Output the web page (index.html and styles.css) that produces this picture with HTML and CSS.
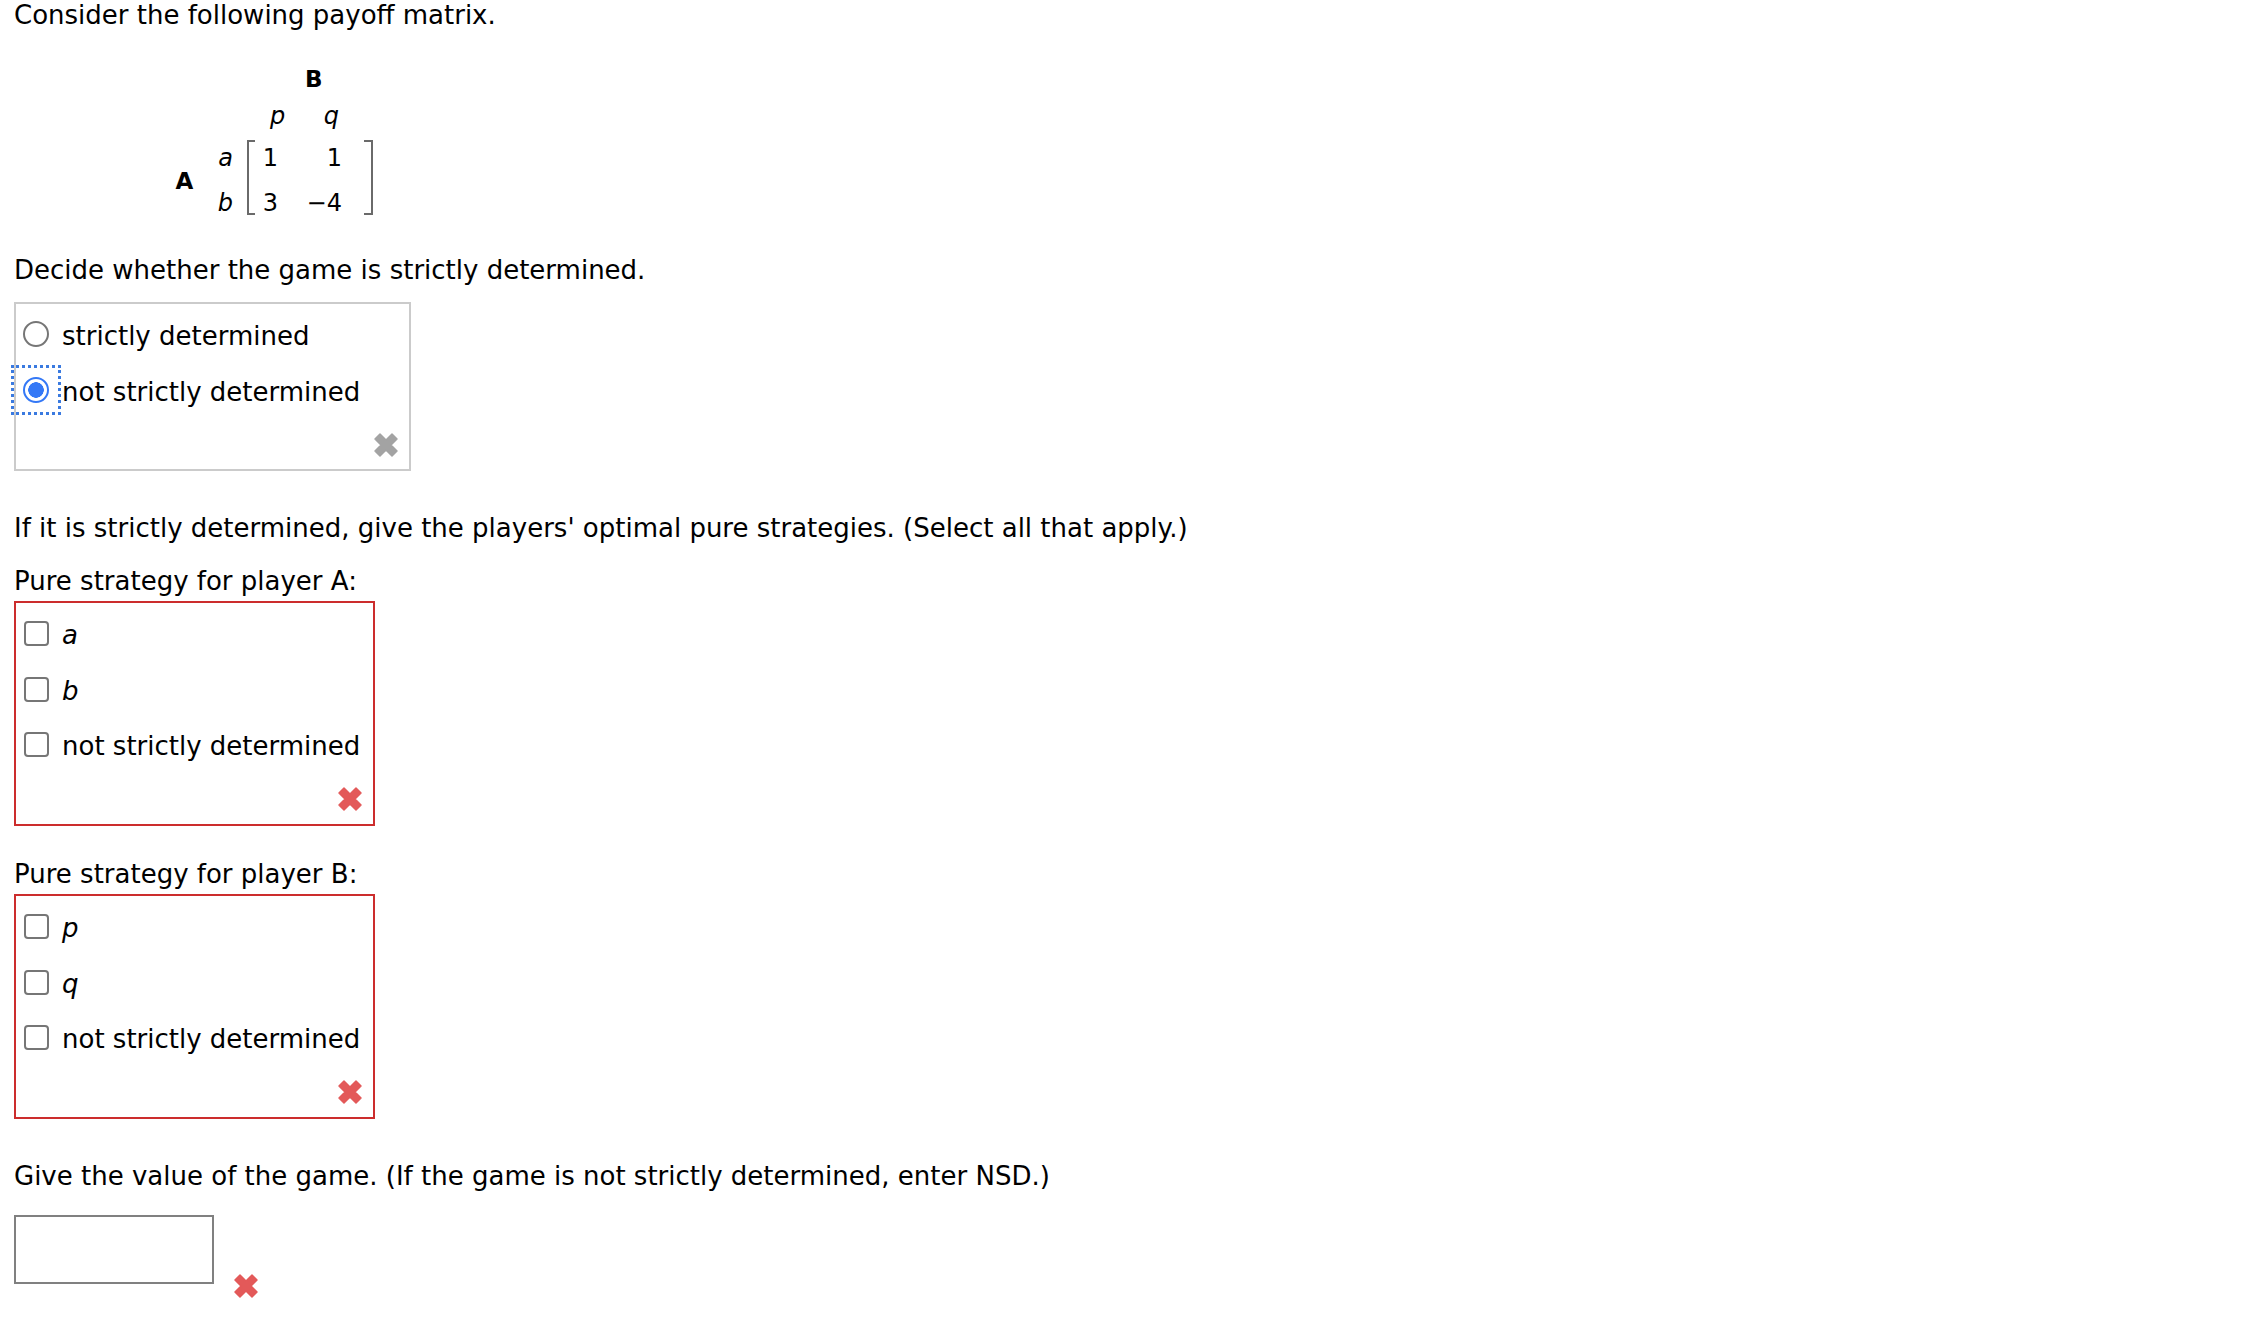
FILE: index.html
```html
<!DOCTYPE html>
<html lang="en">
<head>
<meta charset="utf-8">
<title>Payoff matrix</title>
<link rel="stylesheet" href="styles.css">
</head>
<body>
<div class="page">
  <p class="q">Consider the following payoff matrix.</p>

  <div class="matrix">
    <div class="m-B">B</div>
    <div class="m-p">p</div>
    <div class="m-q">q</div>
    <div class="m-A">A</div>
    <div class="m-a">a</div>
    <div class="m-b">b</div>
    <div class="lb"></div>
    <div class="m-11">1</div>
    <div class="m-12">1</div>
    <div class="m-21">3</div>
    <div class="m-22">&minus;4</div>
    <div class="rb"></div>
  </div>

  <p class="q decide">Decide whether the game is strictly determined.</p>

  <div class="choice radio-box">
    <label class="opt"><input class="radio" type="radio" name="sd"><span class="txt">strictly determined</span></label>
    <label class="opt"><span class="focus"><input class="radio" type="radio" name="sd" checked></span><span class="txt">not strictly determined</span></label>
    <div class="mark">
      <svg class="x gray" width="26" height="26" viewBox="0 0 26 26"><path d="M2 7 7 2 13 8 19 2 24 7 18 13 24 19 19 24 13 18 7 24 2 19 8 13Z"/></svg>
    </div>
  </div>

  <p class="q ifq">If it is strictly determined, give the players' optimal pure strategies. (Select all that apply.)</p>

  <p class="q lab">Pure strategy for player A:</p>
  <div class="choice check-box">
    <label class="opt"><input class="check" type="checkbox"><span class="txt it">a</span></label>
    <label class="opt"><input class="check" type="checkbox"><span class="txt it">b</span></label>
    <label class="opt"><input class="check" type="checkbox"><span class="txt">not strictly determined</span></label>
    <div class="mark">
      <svg class="x red" width="26" height="26" viewBox="0 0 26 26"><path d="M2 7 7 2 13 8 19 2 24 7 18 13 24 19 19 24 13 18 7 24 2 19 8 13Z"/></svg>
    </div>
  </div>

  <p class="q lab lab-b">Pure strategy for player B:</p>
  <div class="choice check-box">
    <label class="opt"><input class="check" type="checkbox"><span class="txt it">p</span></label>
    <label class="opt"><input class="check" type="checkbox"><span class="txt it">q</span></label>
    <label class="opt"><input class="check" type="checkbox"><span class="txt">not strictly determined</span></label>
    <div class="mark">
      <svg class="x red" width="26" height="26" viewBox="0 0 26 26"><path d="M2 7 7 2 13 8 19 2 24 7 18 13 24 19 19 24 13 18 7 24 2 19 8 13Z"/></svg>
    </div>
  </div>

  <p class="q give">Give the value of the game. (If the game is not strictly determined, enter NSD.)</p>
  <div class="answer">
    <input class="value" type="text" aria-label="value of the game">
    <svg class="x red" width="26" height="26" viewBox="0 0 26 26"><path d="M2 7 7 2 13 8 19 2 24 7 18 13 24 19 19 24 13 18 7 24 2 19 8 13Z"/></svg>
  </div>
</div>
</body>
</html>
```

FILE: styles.css
```css
html, body {
  margin: 0;
  padding: 0;
  background: #ffffff;
}

body {
  font-family: "DejaVu Sans", Verdana, sans-serif;
  font-size: 26px;
  line-height: 30px;
  color: #000000;
}

.page {
  padding-left: 14px;
}

.q {
  margin: 0;
}

/* ---------- matrix ---------- */
.matrix {
  display: grid;
  grid-template-columns: 25px 43px 18px 25px 59px 31px;
  grid-template-rows: 34px 40px 44px 46px;
  width: max-content;
  margin: 32px 0 0 158px;
  font-size: 24px;
}

.m-B {
  grid-row: 1;
  grid-column: 4 / 6;
  font-weight: bold;
  font-size: 23px;
  line-height: 34px;
  padding-left: 47px;
}

.m-p, .m-q {
  grid-row: 2;
  font-style: italic;
  line-height: 40px;
}
.m-p {
  grid-column: 4;
  justify-self: start;
  padding-left: 12px;
}
.m-q {
  grid-column: 5;
  justify-self: end;
  padding-right: 3px;
}

.m-A {
  grid-row: 3 / 5;
  grid-column: 1;
  align-self: center;
  justify-self: center;
  font-weight: bold;
  font-size: 23px;
  line-height: 27px;
}

.m-a, .m-b {
  grid-column: 2;
  justify-self: end;
  padding-right: 7px;
  font-style: italic;
}
.m-a, .m-11, .m-12 {
  grid-row: 3;
  line-height: 44px;
}
.m-b, .m-21, .m-22 {
  grid-row: 4;
  line-height: 46px;
}
.m-11, .m-21 {
  grid-column: 4;
  justify-self: center;
}
.m-12, .m-22 {
  grid-column: 5;
  justify-self: end;
}

.lb, .rb {
  grid-row: 3 / 5;
  box-sizing: border-box;
  border: 2px solid #6a6a6a;
  margin-top: 4px;
  margin-bottom: 11px;
}
.lb {
  grid-column: 3;
  width: 8px;
  margin-left: 7px;
  border-right: none;
}
.rb {
  grid-column: 6;
  justify-self: end;
  width: 9px;
  border-left: none;
}

/* ---------- questions ---------- */
.decide {
  margin-top: 29px;
}

.choice {
  box-sizing: border-box;
  border: 2px solid #cbcbcb;
  padding: 2px 10px 11px 7px;
}

.radio-box {
  width: 397px;
  margin-top: 17px;
}

.check-box {
  width: 361px;
  margin-top: 5px;
  border-color: #cc2d2d;
  padding-top: 3px;
  padding-bottom: 12px;
}

.opt {
  display: flex;
  align-items: center;
  height: 56px;
}
.check-box .opt {
  height: 55.5px;
}

.txt {
  padding-top: 3px;
  white-space: nowrap;
}
.it {
  font-style: italic;
}

.mark {
  display: flex;
  justify-content: flex-end;
  margin-top: 14px;
}
.check-box .mark {
  margin-top: 13.5px;
}

.radio {
  appearance: none;
  -webkit-appearance: none;
  box-sizing: border-box;
  flex: none;
  width: 26px;
  height: 26px;
  margin: 0 13px 0 0;
  border: 2px solid #767676;
  border-radius: 50%;
  background: #ffffff;
}
.radio:checked {
  border-color: #3478f6;
  background: radial-gradient(circle, #3478f6 0 7.5px, #ffffff 8px);
}

.focus {
  display: inline-flex;
  flex: none;
  margin-right: 13px;
  outline: 3px dotted #3a7ae0;
  outline-offset: 9px;
}
.focus .radio {
  margin: 0;
}

.check {
  appearance: none;
  -webkit-appearance: none;
  box-sizing: border-box;
  flex: none;
  width: 25px;
  height: 25px;
  margin: 0 13px 0 1px;
  border: 2px solid #767676;
  border-radius: 4px;
  background: #ffffff;
}

.ifq {
  margin-top: 42px;
}

.lab {
  margin-top: 23px;
}
.lab-b {
  margin-top: 33px;
}

.give {
  margin-top: 42px;
}

.answer {
  display: flex;
  align-items: flex-start;
  margin-top: 24px;
}

.value {
  box-sizing: border-box;
  width: 200px;
  height: 69px;
  margin: 0;
  padding: 0 6px;
  border: 2px solid #808080;
  border-radius: 0;
  font: inherit;
  background: #ffffff;
}

.answer .x {
  margin: 58px 0 0 19px;
}

/* ---------- X marks ---------- */
.x {
  display: block;
  flex: none;
}
.x path {
  stroke-width: 1.5;
  stroke-linejoin: round;
}
.x.red path {
  fill: #e35959;
  stroke: #e35959;
}
.x.gray path {
  fill: #a3a3a3;
  stroke: #a3a3a3;
}
```
